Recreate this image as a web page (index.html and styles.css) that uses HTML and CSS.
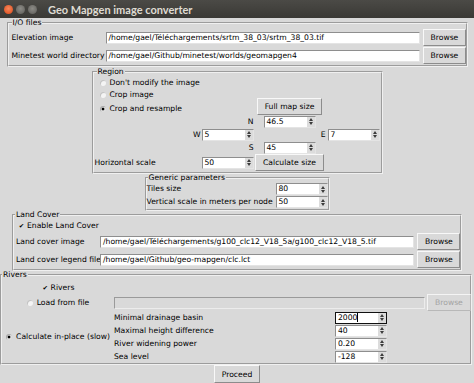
FILE: index.html
```html
<!DOCTYPE html>
<html lang="en">

<head>
  <meta charset="utf-8">
  <title>Geo Mapgen image converter</title>
  <link rel="stylesheet" href="styles.css">
</head>

<body>
  <div class="title-bar">
    <span class="wbtn close"></span>
    <span class="wbtn"></span>
    <span class="wbtn"></span>
    <span class="title">Geo Mapgen image converter</span>
  </div>

  <div class="window">
    <fieldset class="frame io">
      <legend>I/O files</legend>
      <div class="file-grid">
        <span class="lbl">Elevation image</span>
        <div class="entry">/home/gael/Téléchargements/srtm_38_03/srtm_38_03.tif</div>
        <button class="btn">Browse</button>
        <span class="lbl">Minetest world directory</span>
        <div class="entry">/home/gael/Github/minetest/worlds/geomapgen4</div>
        <button class="btn">Browse</button>
      </div>
    </fieldset>

    <fieldset class="frame region">
      <legend>Region</legend>
      <div class="region-grid">
        <div class="radio a-r1">Don't modify the image</div>
        <div class="radio a-r2">Crop image</div>
        <div class="radio on a-r3">Crop and resample</div>
        <button class="btn a-full">Full map size</button>

        <span class="lbl a-nl">N</span>
        <div class="spin a-ns"><span class="val">46.5</span><span class="arrows"></span></div>

        <span class="lbl a-wl">W</span>
        <div class="spin a-ws"><span class="val">5</span><span class="arrows"></span></div>
        <span class="lbl a-el">E</span>
        <div class="spin a-es"><span class="val">7</span><span class="arrows"></span></div>

        <span class="lbl a-sl">S</span>
        <div class="spin a-ss"><span class="val">45</span><span class="arrows"></span></div>

        <span class="lbl a-hl">Horizontal scale</span>
        <div class="spin a-hs"><span class="val">50</span><span class="arrows"></span></div>
        <button class="btn a-calc">Calculate size</button>
      </div>
    </fieldset>

    <fieldset class="frame generic">
      <legend>Generic parameters</legend>
      <div class="param-grid">
        <span class="lbl">Tiles size</span>
        <div class="spin"><span class="val">80</span><span class="arrows"></span></div>
        <span class="lbl">Vertical scale in meters per node</span>
        <div class="spin"><span class="val">50</span><span class="arrows"></span></div>
      </div>
    </fieldset>

    <fieldset class="frame land">
      <legend>Land Cover</legend>
      <div class="file-grid">
        <div class="check">Enable Land Cover</div>
        <span class="lbl">Land cover image</span>
        <div class="entry">/home/gael/Téléchargements/g100_clc12_V18_5a/g100_clc12_V18_5.tif</div>
        <button class="btn">Browse</button>
        <span class="lbl">Land cover legend file</span>
        <div class="entry">/home/gael/Github/geo-mapgen/clc.lct</div>
        <button class="btn">Browse</button>
      </div>
    </fieldset>

    <fieldset class="frame rivers">
      <legend>Rivers</legend>
      <div class="rivers-grid">
        <div class="check r-chk">Rivers</div>
        <div class="radio r-load">Load from file</div>
        <div class="entry disabled r-fe"></div>
        <button class="btn disabled r-fb">Browse</button>
        <div class="radio on r-calc">Calculate in-place (slow)</div>

        <span class="lbl r-l1">Minimal drainage basin</span>
        <div class="spin focus r-s1"><span class="val">2000<span class="caret"></span></span><span class="arrows"></span></div>
        <span class="lbl r-l2">Maximal height difference</span>
        <div class="spin r-s2"><span class="val">40</span><span class="arrows"></span></div>
        <span class="lbl r-l3">River widening power</span>
        <div class="spin r-s3"><span class="val">0.20</span><span class="arrows"></span></div>
        <span class="lbl r-l4">Sea level</span>
        <div class="spin r-s4"><span class="val">-128</span><span class="arrows"></span></div>
      </div>
    </fieldset>

    <button class="btn proceed">Proceed</button>
  </div>
</body>

</html>
```

FILE: styles.css
```css
* {
  box-sizing: border-box;
}

body {
  margin: 0;
  width: 474px;
  height: 383px;
  overflow: hidden;
  background-color: #d9d9d9;
  font-family: "DejaVu Sans", sans-serif;
  font-size: 7.65px;
  color: #000;
}

/* window decoration */
.title-bar {
  height: 18px;
  display: flex;
  align-items: center;
  padding-left: 4px;
  background: linear-gradient(#4b4a46, #3a3935);
}

.wbtn {
  width: 9px;
  height: 9px;
  border-radius: 50%;
  margin-right: 3px;
  background: radial-gradient(circle at 50% 40%, #8c8b86, #5c5b57);
}

.wbtn.close {
  background: radial-gradient(circle at 50% 40%, #f7875c, #dc4816);
}

.title {
  margin-left: 8px;
  font-family: Lato, sans-serif;
  font-weight: bold;
  font-size: 11px;
  color: #dfdbd2;
}

.window {
  display: flex;
  flex-direction: column;
  align-items: center;
}

/* label frames */
.frame {
  margin: 0;
  padding: 0;
  min-width: 0;
  border: 2px groove #f0f0f0;
}

.frame legend {
  height: 10px;
  line-height: 10px;
  padding: 0 1px;
  margin-left: 3px;
}

.lbl {
  line-height: 10px;
  white-space: nowrap;
}

/* widgets */
.entry {
  height: 12px;
  padding-left: 2px;
  line-height: 10px;
  white-space: nowrap;
  overflow: hidden;
  background-color: #fff;
  border: 1px solid;
  border-color: #8e8e8e #e4e4e4 #e4e4e4 #8e8e8e;
}

.entry.disabled {
  background-color: #d9d9d9;
  border-color: #9a9a9a #ececec #ececec #9a9a9a;
}

.btn {
  height: 17px;
  padding: 0 7px;
  font: inherit;
  color: #000;
  white-space: nowrap;
  background-color: #d9d9d9;
  border: 1px solid;
  border-color: #f8f8f8 #8c8c8c #8c8c8c #f8f8f8;
}

.btn.disabled {
  color: #a3a3a3;
  border-color: #f4f4f4 #b8b8b8 #b8b8b8 #f4f4f4;
}

.spin {
  width: 52px;
  height: 12px;
  display: flex;
  background-color: #fff;
  border: 1px solid;
  border-color: #8e8e8e #e4e4e4 #e4e4e4 #8e8e8e;
}

.spin.focus {
  border-color: #111;
}

.spin .val {
  flex: 1;
  padding-left: 2px;
  line-height: 10px;
  display: flex;
  align-items: center;
}

.caret {
  width: 1px;
  height: 9px;
  background-color: #000;
}

.spin .arrows {
  width: 8px;
  display: flex;
  flex-direction: column;
  align-items: center;
  justify-content: center;
  gap: 1px;
  background-color: #dcdcdc;
}

.spin .arrows::before,
.spin .arrows::after {
  content: "";
  border-left: 2.5px solid transparent;
  border-right: 2.5px solid transparent;
}

.spin .arrows::before {
  border-bottom: 3px solid #3c3c3c;
}

.spin .arrows::after {
  border-top: 3px solid #3c3c3c;
}

.radio {
  display: flex;
  align-items: center;
  gap: 4px;
  line-height: 10px;
  white-space: nowrap;
}

.radio::before {
  content: "";
  width: 6px;
  height: 6px;
  border-radius: 50%;
  background-color: #f4f4f4;
  box-shadow: inset 1px 1px 0 #c2c2c2;
}

.radio.on::before {
  background: radial-gradient(circle, #000 0 1.2px, #dedede 1.7px);
  box-shadow: inset 1px 1px 0 #a8a8a8;
}

.check {
  display: flex;
  align-items: center;
  gap: 2px;
  line-height: 10px;
  white-space: nowrap;
}

.check::before {
  content: "\2714";
  width: 7px;
  font-size: 6.5px;
  text-align: center;
}

/* I/O and land cover rows */
.file-grid {
  display: grid;
  column-gap: 3px;
  row-gap: 1px;
  align-items: center;
}

.io {
  width: 461px;
}

.io .file-grid {
  grid-template-columns: 91px 314px 43px;
  grid-template-rows: 17px 17px;
  padding: 1px 0 1px 3px;
}

.land {
  width: 450px;
  margin-top: -1px;
}

.land legend,
.generic legend {
  margin-left: 1px;
}

.land .file-grid {
  grid-template-columns: 81px 314px 43px;
  grid-template-rows: 12px 17px 17px;
  padding: 0 0 1px 2px;
}

.land .check {
  grid-column: 1 / -1;
  margin-left: 2px;
}

/* region */
.region {
  width: 291px;
}

.region-grid {
  display: grid;
  grid-template-columns: 100px 7px 52px 72px 54px;
  grid-template-rows: 12px 12px 14px 13px 13px 13px 17px;
  grid-template-areas:
    "r1 r1 r1 .    ."
    "r2 r2 r2 .    ."
    "r3 r3 r3 full ."
    ".  .  nl ns   ."
    "wl wl ws el   es"
    ".  .  sl ss   ."
    "hl hl hs calc .";
  align-items: center;
  padding: 0 1px 1px 1px;
}

.region .radio {
  margin-left: 5px;
}

.a-r1 { grid-area: r1; }
.a-r2 { grid-area: r2; }
.a-r3 { grid-area: r3; margin-top: 1px; }
.a-full { grid-area: full; justify-self: center; align-self: start; margin-top: -3px; }
.a-nl { grid-area: nl; justify-self: end; }
.a-ns { grid-area: ns; justify-self: center; }
.a-wl { grid-area: wl; justify-self: end; margin-right: 1px; }
.a-ws { grid-area: ws; }
.a-el { grid-area: el; justify-self: end; }
.a-es { grid-area: es; justify-self: end; }
.a-sl { grid-area: sl; justify-self: end; }
.a-ss { grid-area: ss; justify-self: center; }
.a-hl { grid-area: hl; }
.a-hs { grid-area: hs; }
.a-calc { grid-area: calc; justify-self: center; }

/* generic parameters */
.generic {
  width: 185px;
  margin-top: -1px;
}

.param-grid {
  display: grid;
  grid-template-columns: 1fr 52px;
  grid-template-rows: 12px 12px;
  row-gap: 1px;
  align-items: center;
  padding-bottom: 1px;
}

/* rivers */
.rivers {
  width: 472px;
  margin-top: -1px;
  align-self: flex-start;
}

.rivers legend {
  margin-left: 0;
}

.rivers-grid {
  display: grid;
  grid-template-columns: 112px 221px 52px 40px 43px;
  grid-template-rows: 13px 17px 13px 13px 13px 13px;
  grid-template-areas:
    "chk  .  .  .  ."
    "load fe fe fe fb"
    "calc l1 s1 .  ."
    "calc l2 s2 .  ."
    "calc l3 s3 .  ."
    "calc l4 s4 .  .";
  align-items: center;
  justify-items: start;
  padding-top: 1px;
}

.r-chk { grid-area: chk; justify-self: center; }
.r-load { grid-area: load; justify-self: center; }
.r-fe { grid-area: fe; justify-self: stretch; margin-right: 2px; }
.r-fb { grid-area: fb; }
.r-calc { grid-area: calc; justify-self: center; }
.r-l1 { grid-area: l1; }
.r-l2 { grid-area: l2; }
.r-l3 { grid-area: l3; }
.r-l4 { grid-area: l4; }
.r-s1 { grid-area: s1; }
.r-s2 { grid-area: s2; }
.r-s3 { grid-area: s3; }
.r-s4 { grid-area: s4; }

.proceed {
  height: 18px;
}
```
